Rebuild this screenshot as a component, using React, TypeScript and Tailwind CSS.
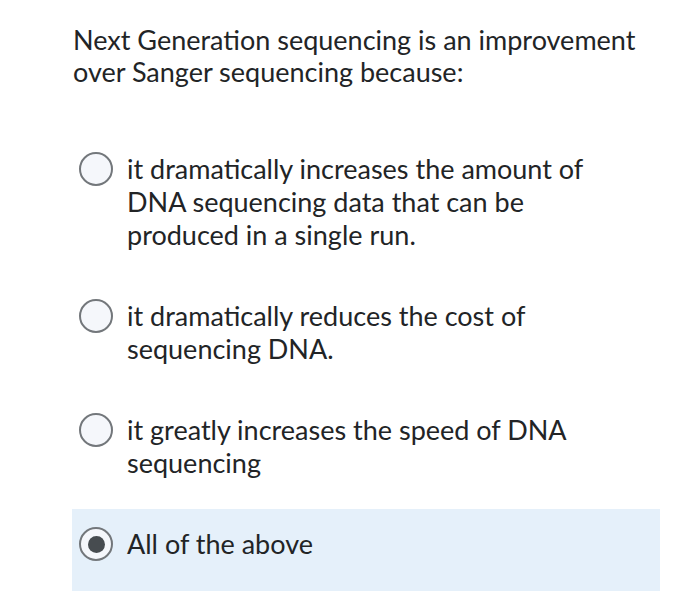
const OPTIONS = [
  'it dramatically increases the amount of DNA sequencing data that can be produced in a single run.',
  'it dramatically reduces the cost of sequencing DNA.',
  'it greatly increases the speed of DNA sequencing',
  'All of the above',
]

export default function App() {
  const selected = 3
  return (
    <div className="w-[700px] h-[602px] bg-white text-[#222426] font-['Lato','Noto_Sans',sans-serif]">
      <div className="pl-[73px] pt-[24px]">
        <p className="text-[27px] leading-[32px] w-[590px]">
          Next Generation sequencing is an improvement over Sanger sequencing because:
        </p>
      </div>
      <div className="mt-[46px] ml-[72px] w-[588px]">
        {OPTIONS.map((text, i) => (
          <div
            key={i}
            className={`flex items-start gap-[14px] pl-[7px] pt-[18px] pb-[30px] ${i === selected ? 'bg-[#e5f0fa]' : ''}`}
          >
            <div className="w-[34px] h-[34px] shrink-0 rounded-full border-[2px] border-[#73777b] bg-[#f5f7fb] flex items-center justify-center">
              {i === selected && <div className="w-[17px] h-[17px] rounded-full bg-[#474c50]" />}
            </div>
            <span className="text-[27px] leading-[33px] w-[470px]">{text}</span>
          </div>
        ))}
      </div>
    </div>
  )
}
